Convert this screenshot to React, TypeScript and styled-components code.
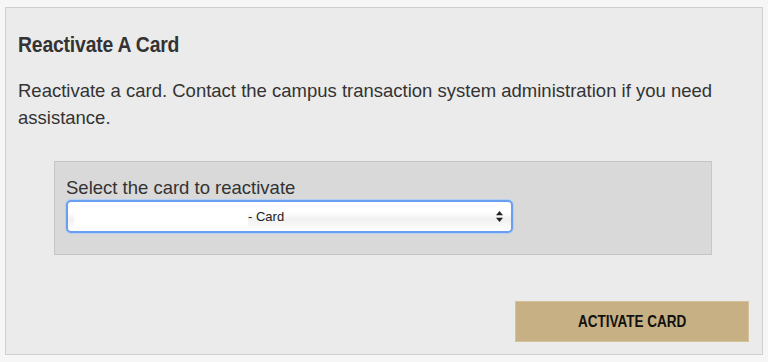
import React from "react";
import { createGlobalStyle, styled } from "styled-components";

const GlobalStyle = createGlobalStyle`
  html, body {
    margin: 0;
    padding: 0;
    background-color: #f6f6f6;
    font-family: "Liberation Sans", Arial, sans-serif;
  }
`;

const Page = styled.div`
  padding: 7px 5px 0 5px;
  width: 768px;
  height: 362px;
  box-sizing: border-box;
`;

const Panel = styled.div`
  border: 1px solid #cfcfcf;
  background-color: #ebebeb;
  height: 348px;
  box-sizing: border-box;
  padding: 23px 12px 0 12px;
  display: flex;
  flex-direction: column;
`;

// the original uses a condensed bold face; squeeze Liberation Sans to match
const Condensed = styled.span<{ $scale: number }>`
  display: inline-block;
  transform: scaleX(${(p) => p.$scale});
  transform-origin: ${(p) => (p.$scale < 0.84 ? "center" : "left")} center;
  white-space: nowrap;
`;

const Title = styled.h2`
  margin: 0;
  font-weight: bold;
  font-size: 22.5px;
  line-height: 28px;
  color: #333;
  letter-spacing: -0.2px;
`;

const Intro = styled.p`
  margin: 18px 0 0 0;
  font-size: 18.5px;
  line-height: 27px;
  color: #333;
`;

const FieldBox = styled.div`
  margin: 30px 38px 0 36px;
  height: 94px;
  box-sizing: border-box;
  background-color: #d9d9d9;
  border: 1px solid #c6c6c6;
  padding: 15px 11px 0 11px;
`;

const Label = styled.label`
  display: block;
  font-size: 18.5px;
  line-height: 22px;
  color: #333;
`;

const SelectBox = styled.div`
  margin-top: 1px;
  width: 447px;
  height: 33px;
  box-sizing: border-box;
  border: 2px solid #6a9ef0;
  border-radius: 5px;
  background: linear-gradient(#ffffff 0%, #ffffff 35%, #f1f1f1 60%, #ffffff 100%);
  box-shadow: 0 0 0 1px #b8cff5;
  display: flex;
  align-items: center;
  padding: 0 8px 0 6px;
`;

const Redacted = styled.span`
  width: 174px;
  height: 20px;
  background-color: #ffffff;
`;

const OptionText = styled.span`
  flex: 1;
  font-size: 13px;
  color: #222;
`;

const Arrows = styled.svg`
  width: 7px;
  height: 11px;
  fill: #222;
`;

const Footer = styled.div`
  margin-top: auto;
  display: flex;
  justify-content: flex-end;
  padding: 0 1px 12px 0;
`;

const ActionButton = styled.button`
  width: 234px;
  height: 41px;
  border: 1px solid #d6c29a;
  background-color: #c7b083;
  font-family: "Liberation Sans", Arial, sans-serif;
  font-weight: bold;
  font-size: 16.5px;
  color: #111;
  cursor: pointer;
  padding: 0;
`;

const App = () => {
  return (
    <>
      <GlobalStyle />
      <Page>
        <Panel>
          <Title>
            <Condensed $scale={0.86}>Reactivate A Card</Condensed>
          </Title>
          <Intro>
            Reactivate a card. Contact the campus transaction system
            administration if you need assistance.
          </Intro>
          <FieldBox>
            <Label>Select the card to reactivate</Label>
            <SelectBox>
              <Redacted />
              <OptionText>- Card</OptionText>
              <Arrows viewBox="0 0 7 11">
                <path d="M3.5 0 L7 4.2 H0 Z" />
                <path d="M3.5 11 L7 6.8 H0 Z" />
              </Arrows>
            </SelectBox>
          </FieldBox>
          <Footer>
            <ActionButton>
              <Condensed $scale={0.82}>ACTIVATE CARD</Condensed>
            </ActionButton>
          </Footer>
        </Panel>
      </Page>
    </>
  );
};

export default App;
